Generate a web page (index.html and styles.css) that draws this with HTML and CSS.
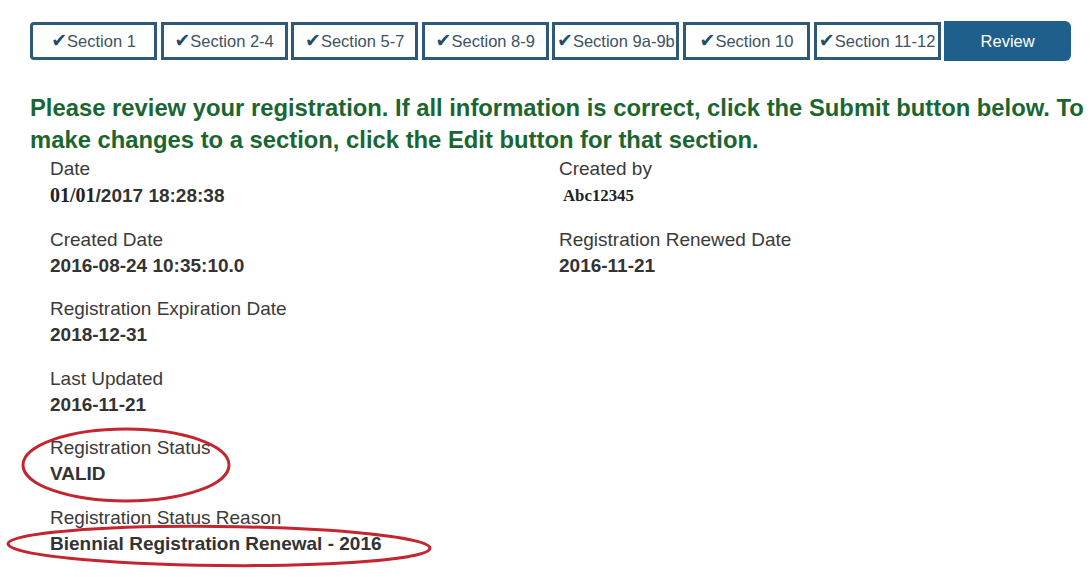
FILE: index.html
```html
<!DOCTYPE html>
<html lang="en">
<head>
<meta charset="utf-8">
<title>Review Registration</title>
<link rel="stylesheet" href="styles.css">
</head>
<body>
<div class="page">
  <nav class="tabs">
    <a class="tab done first"><span class="chk">✔</span>Section 1</a>
    <a class="tab done"><span class="chk">✔</span>Section 2-4</a>
    <a class="tab done"><span class="chk">✔</span>Section 5-7</a>
    <a class="tab done"><span class="chk">✔</span>Section 8-9</a>
    <a class="tab done"><span class="chk">✔</span>Section 9a-9b</a>
    <a class="tab done"><span class="chk">✔</span>Section 10</a>
    <a class="tab done"><span class="chk">✔</span>Section 11-12</a>
    <a class="tab active">Review</a>
  </nav>
  <h2 class="intro">Please review your registration. If all information is correct, click the Submit button below. To<br>make changes to a section, click the Edit button for that section.</h2>
  <div class="fields">
    <div class="col">
      <div class="field"><div class="label">Date</div><div class="value"><span class="serif">01/01</span>/2017 18:28:38</div></div>
      <div class="field"><div class="label">Created Date</div><div class="value">2016-08-24 10:35:10.0</div></div>
      <div class="field"><div class="label">Registration Expiration Date</div><div class="value">2018-12-31</div></div>
      <div class="field"><div class="label">Last Updated</div><div class="value">2016-11-21</div></div>
      <div class="field"><div class="label">Registration Status</div><div class="value">VALID</div></div>
      <div class="field"><div class="label">Registration Status Reason</div><div class="value">Biennial Registration Renewal - 2016</div></div>
    </div>
    <div class="col">
      <div class="field"><div class="label">Created by</div><div class="value"><span class="serif small">Abc12345</span></div></div>
      <div class="field"><div class="label">Registration Renewed Date</div><div class="value">2016-11-21</div></div>
    </div>
  </div>
</div>
<svg class="marks" width="1092" height="577" viewBox="0 0 1092 577" aria-hidden="true">
  <ellipse cx="126" cy="465" rx="103" ry="36" fill="none" stroke="#c3262f" stroke-width="3"/>
  <ellipse cx="219" cy="546" rx="211" ry="19.5" fill="none" stroke="#c3262f" stroke-width="3" transform="rotate(0.6 219 546)"/>
</svg>
</body>
</html>
```
FILE: styles.css
```css
html, body {
  margin: 0;
  padding: 0;
  background: #ffffff;
}
body {
  font-family: "Liberation Sans", Arial, sans-serif;
  color: #333333;
  width: 1092px;
  height: 577px;
  overflow: hidden;
  position: relative;
}
.page {
  padding: 21px 0 0 30px;
}
.tabs {
  display: flex;
  gap: 3.6px;
  height: 40px;
  align-items: center;
}
.tab {
  box-sizing: border-box;
  width: 127px;
  height: 38px;
  display: flex;
  align-items: center;
  justify-content: center;
  border: 3px solid #2c5a78;
  background: #ffffff;
  color: #3c5264;
  font-size: 16.5px;
  text-decoration: none;
  white-space: nowrap;
}
.tab.first {
  border-radius: 4px 0 0 4px;
}
.chk {
  font-family: "DejaVu Sans", sans-serif;
  font-size: 19px;
  line-height: 1;
  color: #1f4d6c;
  margin-top: -2px;
}
.tab.active {
  height: 40px;
  border: none;
  background: #1f5f8b;
  color: #ffffff;
  border-radius: 0 6px 6px 0;
  font-size: 16.5px;
}
.intro {
  margin: 31px 0 0 0;
  font-size: 23.8px;
  line-height: 32px;
  font-weight: bold;
  color: #1a6631;
  white-space: nowrap;
}
.fields {
  display: grid;
  grid-template-columns: 509px 1fr;
  padding-left: 20px;
  margin-top: 0;
}
.col {
  display: flex;
  flex-direction: column;
  gap: 17.6px;
}
.label {
  font-size: 19px;
  line-height: 26px;
  color: #3a3a3a;
}
.value {
  font-size: 19px;
  line-height: 26px;
  font-weight: bold;
  color: #333333;
}
.serif {
  font-family: "Liberation Serif", "Times New Roman", serif;
  font-size: 20px;
  color: #222222;
}
.serif.small {
  font-size: 16.8px;
  margin-left: 4px;
}
.marks {
  position: absolute;
  left: 0;
  top: 0;
  pointer-events: none;
}
```
